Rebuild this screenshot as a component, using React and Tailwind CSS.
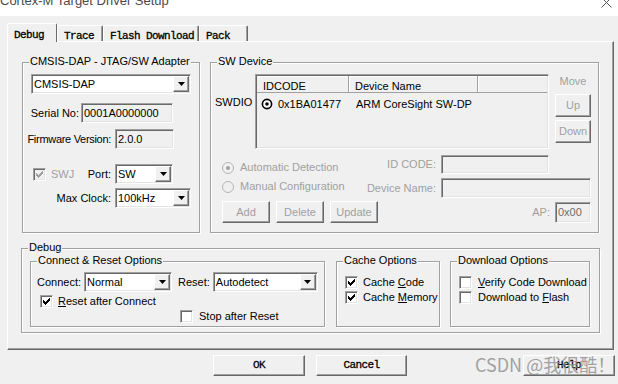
import React from 'react'

const sunken = "border border-t-[#a0a0a0] border-l-[#a0a0a0] border-r-white border-b-white shadow-[inset_1px_1px_0_#696969,inset_-1px_-1px_0_#e3e3e3]"
const raised = "border border-t-white border-l-white border-r-[#696969] border-b-[#696969] shadow-[inset_-1px_-1px_0_#a0a0a0]"

function Group({ label, className = '', children }) {
    return (
        <div className={`relative shrink-0 border border-[#a0a0a0] shadow-[inset_1px_1px_0_white,1px_1px_0_white] ${className}`}>
            <span className="absolute left-[6px] -top-[8px] bg-[#f0f0f0] px-[1px] leading-[13px]">{label}</span>
            {children}
        </div>
    )
}

function Combo({ value, className = '' }) {
    return (
        <div className={`${sunken} bg-white h-[20px] p-[1px] flex items-center shrink-0 ${className}`}>
            <span className="flex-1 pl-[1px] leading-[13px]">{value}</span>
            <span className={`${raised} bg-[#f0f0f0] w-[16px] h-[16px] flex items-center justify-center`}>
                <svg width="7" height="4" viewBox="0 0 7 4"><path d="M0 0h7l-3.5 4z" fill="black" /></svg>
            </span>
        </div>
    )
}

function Field({ children, className = '', muted }) {
    return (
        <div className={`${sunken} bg-[#f0f0f0] pl-[2px] flex items-center shrink-0 leading-[13px] ${muted ? 'text-[#6d6d6d]' : ''} ${className}`}>
            {children}
        </div>
    )
}

function Btn({ children, className = '', disabled }) {
    return (
        <div className={`${raised} bg-[#f0f0f0] flex items-center justify-center shrink-0 leading-[13px] ${disabled ? 'text-[#a0a0a0]' : ''} ${className}`}>
            {children}
        </div>
    )
}

function Label({ children, className = '' }) {
    return <span className={`flex justify-end shrink-0 ${className}`}>{children}</span>
}

function Check({ checked, disabled }) {
    return (
        <span className={`${sunken} w-[13px] h-[13px] flex items-center justify-center shrink-0 ${disabled ? 'bg-[#f0f0f0]' : 'bg-white'}`}>
            {checked && (
                <svg width="7" height="7" viewBox="0 0 7 7" shapeRendering="crispEdges">
                    <path d="M0 2h1v3h-1zM1 3h1v3h-1zM2 4h1v3h-1zM3 3h1v3h-1zM4 2h1v3h-1zM5 1h1v3h-1zM6 0h1v3h-1z" fill={disabled ? '#a0a0a0' : 'black'} />
                </svg>
            )}
        </span>
    )
}

function Radio({ checked }) {
    return (
        <svg width="12" height="12" viewBox="0 0 12 12" className="shrink-0">
            <circle cx="6" cy="6" r="5.5" fill="#f0f0f0" stroke="#b4b4b4" />
            {checked && <circle cx="6" cy="6" r="2" fill="#a0a0a0" />}
        </svg>
    )
}

function Tab({ label, active, className = '' }) {
    return (
        <div className={`relative shrink-0 border-t border-l border-t-white border-l-white border-r border-r-[#696969] rounded-tl-[2px] rounded-tr-[2px] pl-[6px] bg-[#f0f0f0] font-['Liberation_Mono'] text-[11px] tracking-[-0.6px] text-black [-webkit-text-stroke:0.3px_black] ${active ? 'h-[19px] -mb-[1px] z-10 pt-[3px]' : 'h-[16px] pt-[2px] shadow-[inset_-1px_0_0_#a0a0a0]'} ${className}`}>
            {label}
        </div>
    )
}

export default function App() {
    return (
        <div className="relative w-[618px] h-[384px] overflow-hidden whitespace-nowrap bg-[#f0f0f0] font-['Liberation_Sans',sans-serif] text-[11px] text-black">
            {/* title bar */}
            <div className="h-[16px] bg-white flex justify-between overflow-hidden">
                <span className="-mt-[6px] leading-[14px] text-[13px] text-[#4a4a4a]">Cortex-M Target Driver Setup</span>
                <svg width="11" height="11" viewBox="0 0 11 11" className="-mt-[3px] mr-[6px]">
                    <path d="M0.5 0.5l10 10M10.5 0.5l-10 10" stroke="#555" strokeWidth="1" />
                </svg>
            </div>

            <div className="pt-[7px]">
                {/* tabs */}
                <div className="flex items-end h-[18px] ml-[7px]">
                    <Tab label="Debug" active className="w-[50px]" />
                    <Tab label="Trace" className="w-[46px]" />
                    <Tab label="Flash Download" className="w-[96px]" />
                    <Tab label="Pack" className="w-[49px]" />
                </div>

                {/* panel */}
                <div className="ml-[7px] w-[607px] h-[309px] border border-t-white border-l-white border-r-[#696969] border-b-[#696969] shadow-[inset_-1px_-1px_0_#a0a0a0] pt-[20px]">
                    <div className="flex ml-[14px]">
                        <Group label="CMSIS-DAP - JTAG/SW Adapter" className="w-[178px] h-[171px]">
                            <div className="flex flex-col">
                                <Combo value="CMSIS-DAP" className="ml-[8px] mt-[11px] w-[160px]" />
                                <div className="flex items-center mt-[9px]">
                                    <Label className="w-[56px]">Serial No:</Label>
                                    <Field className="ml-[2px] w-[92px] h-[20px]">0001A0000000</Field>
                                </div>
                                <div className="flex items-center mt-[6px]">
                                    <Label className="w-[88px] tracking-[-0.3px]">Firmware Version:</Label>
                                    <Field className="ml-[4px] w-[59px] h-[20px]">2.0.0</Field>
                                </div>
                                <div className="flex items-center mt-[15px]">
                                    <div className="w-[88px] flex items-center pl-[10px]">
                                        <Check checked disabled />
                                        <span className="ml-[5px] text-[#a0a0a0]">SWJ</span>
                                        <span className="flex-1 text-right">Port:</span>
                                    </div>
                                    <Combo value="SW" className="ml-[4px] w-[58px]" />
                                </div>
                                <div className="flex items-center mt-[4px]">
                                    <Label className="w-[88px]">Max Clock:</Label>
                                    <Combo value="100kHz" className="ml-[4px] w-[76px]" />
                                </div>
                            </div>
                        </Group>

                        <Group label="SW Device" className="ml-[10px] w-[389px] h-[171px] flex flex-col">
                            <div className="flex h-[86px]">
                                <span className="ml-[4px] mt-[33px] w-[40px] leading-[13px]">SWDIO</span>
                                <div className={`${sunken} bg-[#f0f0f0] mt-[11px] w-[294px] h-[75px] p-[1px]`}>
                                    <div className="flex h-[17px] border-b border-b-[#a0a0a0] shadow-[inset_0_1px_0_white]">
                                        <span className="w-[92px] pl-[6px] pt-[2px] border-r border-r-[#a0a0a0]">IDCODE</span>
                                        <span className="w-[129px] pl-[6px] pt-[2px] border-r border-r-[#a0a0a0] shadow-[inset_1px_0_0_white]">Device Name</span>
                                        <span className="flex-1 shadow-[inset_1px_0_0_white]" />
                                    </div>
                                    <div className="flex items-center h-[16px] mt-[3px]">
                                        <span className="w-[92px] pl-[4px] flex items-center">
                                            <svg width="12" height="12" viewBox="0 0 12 12">
                                                <circle cx="6" cy="6" r="4.6" fill="white" stroke="black" strokeWidth="1.6" />
                                                <circle cx="6" cy="6" r="1.8" fill="black" />
                                            </svg>
                                            <span className="ml-[5px]">0x1BA01477</span>
                                        </span>
                                        <span className="pl-[7px]">ARM CoreSight SW-DP</span>
                                    </div>
                                </div>
                                <div className="ml-[6px] mt-[12px] w-[36px] flex flex-col items-center">
                                    <span className="leading-[13px] text-[#a0a0a0]">Move</span>
                                    <Btn disabled className="mt-[6px] w-[36px] h-[23px]">Up</Btn>
                                    <Btn disabled className="mt-[3px] w-[36px] h-[23px]">Down</Btn>
                                </div>
                            </div>

                            <div className="flex justify-between">
                                <div className="ml-[11px] mt-[9px] w-[140px] shrink-0 flex flex-col text-[#a0a0a0]">
                                    <div className="flex items-center h-[19px]">
                                        <Radio checked />
                                        <span className="ml-[6px]">Automatic Detection</span>
                                    </div>
                                    <div className="flex items-center h-[19px]">
                                        <Radio />
                                        <span className="ml-[6px]">Manual Configuration</span>
                                    </div>
                                    <div className="flex mt-[5px]">
                                        <Btn disabled className="w-[48px] h-[22px]">Add</Btn>
                                        <Btn disabled className="ml-[6px] w-[48px] h-[22px]">Delete</Btn>
                                        <Btn disabled className="ml-[6px] w-[48px] h-[22px]">Update</Btn>
                                    </div>
                                </div>
                                <div className="mr-[7px] mt-[6px] flex flex-col items-end text-[#a0a0a0]">
                                    <div className="flex items-center mr-[42px]">
                                        <span>ID CODE:</span>
                                        <Field className="ml-[5px] w-[108px] h-[19px]" />
                                    </div>
                                    <div className="flex items-center mt-[4px]">
                                        <span>Device Name:</span>
                                        <Field className="ml-[5px] w-[150px] h-[20px]" />
                                    </div>
                                    <div className="flex items-center mt-[4px]">
                                        <span>AP:</span>
                                        <Field muted className="ml-[5px] w-[36px] h-[21px]">0x00</Field>
                                    </div>
                                </div>
                            </div>
                        </Group>
                    </div>

                    <Group label="Debug" className="ml-[13px] mt-[15px] w-[579px] h-[85px]">
                        <div className="flex ml-[8px] mt-[12px]">
                            <Group label="Connect & Reset Options" className="w-[295px] h-[66px]">
                                <div className="flex items-center mt-[10px] ml-[6px]">
                                    <span>Connect:</span>
                                    <Combo value="Normal" className="ml-[3px] w-[88px]" />
                                    <span className="ml-[6px]">Reset:</span>
                                    <Combo value="Autodetect" className="ml-[3px] w-[105px]" />
                                </div>
                                <div className="flex items-center mt-[3px] ml-[9px] h-[13px]">
                                    <Check checked />
                                    <span className="ml-[5px]"><u>R</u>eset after Connect</span>
                                </div>
                                <div className="flex items-center mt-[2px] ml-[149px] h-[13px]">
                                    <Check />
                                    <span className="ml-[6px]">Stop after Reset</span>
                                </div>
                            </Group>
                            <Group label="Cache Options" className="ml-[11px] w-[104px] h-[66px]">
                                <div className="flex items-center mt-[14px] ml-[8px] h-[13px]">
                                    <Check checked />
                                    <span className="ml-[5px]">Cache <u>C</u>ode</span>
                                </div>
                                <div className="flex items-center mt-[2px] ml-[8px] h-[13px]">
                                    <Check checked />
                                    <span className="ml-[5px]">Cache <u>M</u>emory</span>
                                </div>
                            </Group>
                            <Group label="Download Options" className="ml-[10px] w-[140px] h-[66px]">
                                <div className="flex items-center mt-[14px] ml-[8px] h-[13px]">
                                    <Check />
                                    <span className="ml-[6px]"><u>V</u>erify Code Download</span>
                                </div>
                                <div className="flex items-center mt-[2px] ml-[8px] h-[13px]">
                                    <Check />
                                    <span className="ml-[6px]">Download to <u>F</u>lash</span>
                                </div>
                            </Group>
                        </div>
                    </Group>
                </div>

                {/* dialog buttons */}
                <div className="flex mt-[5px] ml-[213px] font-['Liberation_Mono'] text-[11px] tracking-[-0.6px] [-webkit-text-stroke:0.3px_black]">
                    <Btn className="w-[92px] h-[21px]">OK</Btn>
                    <Btn className="ml-[11px] w-[91px] h-[21px]">Cancel</Btn>
                    <Btn className="ml-[116px] w-[92px] h-[21px]">Help</Btn>
                </div>
            </div>

            {/* watermark */}
            <span className="absolute left-[475px] top-[353px] text-[18px] leading-[22px] text-[#8c8c8c]/80 font-['Noto_Sans_CJK_SC',sans-serif]">CSDN @我很酷！</span>
        </div>
    )
}
